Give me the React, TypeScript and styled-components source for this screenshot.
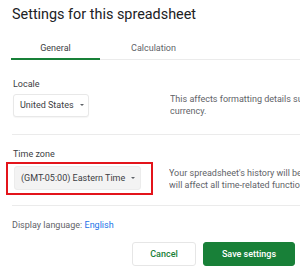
import React from "react";
import styled, { createGlobalStyle } from "styled-components";

const GlobalStyle = createGlobalStyle`
  body {
    margin: 0;
    background: #fff;
    font-family: Roboto, "Liberation Sans", sans-serif;
    overflow: hidden;
  }
`;

const Dialog = styled.div`
  width: 300px;
  height: 273px;
  padding: 3px 0 0 12px;
  box-sizing: border-box;
  overflow: hidden;
`;

const Title = styled.h2`
  margin: 0;
  font-size: 14.4px;
  line-height: 24px;
  font-weight: 400;
  color: #202124;
  white-space: nowrap;
`;

const TabBar = styled.div`
  display: flex;
  margin: 11px 0 0 -1px;
  border-bottom: 1px solid #ebebeb;
`;

const Tab = styled.div<{ $w: number; $active?: boolean }>`
  width: ${(p) => p.$w}px;
  height: 20px;
  display: flex;
  align-items: center;
  justify-content: center;
  font-size: 9px;
  color: ${(p) => (p.$active ? "#3c4043" : "#5f6368")};
  border-bottom: 2px solid ${(p) => (p.$active ? "#188038" : "transparent")};
  margin-bottom: -1px;
`;

const Section = styled.div<{ $top: number; $bottom: number }>`
  padding: ${(p) => p.$top}px 0 ${(p) => p.$bottom}px 1px;
  border-bottom: 1px solid #ebebeb;
`;

const Label = styled.div`
  font-size: 9px;
  line-height: 12px;
  color: #3c4043;
`;

const Row = styled.div<{ $top: number }>`
  display: flex;
  align-items: center;
  margin-top: ${(p) => p.$top}px;
`;

const Highlight = styled.div`
  flex: none;
  width: 147px;
  margin-left: -7px;
  padding: 2px 0 3px 6px;
  border: 2px solid #e3141b;
  box-sizing: border-box;
`;

const Select = styled.div<{ $w: number; $h: number; $filled?: boolean }>`
  flex: none;
  width: ${(p) => p.$w}px;
  height: ${(p) => p.$h}px;
  display: flex;
  align-items: center;
  padding: 0 0 0 6px;
  box-sizing: border-box;
  border: 1px solid ${(p) => (p.$filled ? "#ececec" : "#e8e8e8")};
  border-radius: 3px;
  background: ${(p) => (p.$filled ? "#f3f3f3" : "#fff")};
  box-shadow: ${(p) => (p.$filled ? "none" : "0 1px 1px rgba(0,0,0,0.04)")};
  font-size: 9px;
  color: #3c4043;
  white-space: nowrap;
`;

const Caret = styled.span`
  margin-left: 6px;
  width: 0;
  height: 0;
  border-left: 2.5px solid transparent;
  border-right: 2.5px solid transparent;
  border-top: 2.5px solid #5f6368;
`;

const Desc = styled.div<{ $gap: number }>`
  margin-left: ${(p) => p.$gap}px;
  font-size: 9px;
  line-height: 12px;
  color: #5f6368;
  white-space: nowrap;
  overflow: hidden;
`;

const Language = styled.div`
  margin-top: 13px;
  font-size: 9px;
  line-height: 12px;
  color: #5f6368;
`;

const Link = styled.span`
  color: #1a73e8;
`;

const Footer = styled.div`
  display: flex;
  justify-content: flex-end;
  gap: 7px;
  margin: 11px 5px 0 0;
`;

const Button = styled.button<{ $primary?: boolean }>`
  height: 24px;
  padding: 0;
  width: ${(p) => (p.$primary ? 92 : 64)}px;
  border-radius: 3px;
  font-family: Roboto, "Liberation Sans", sans-serif;
  font-size: 9px;
  font-weight: 500;
  border: 1px solid ${(p) => (p.$primary ? "#188038" : "#e6e6e6")};
  background: ${(p) => (p.$primary ? "#188038" : "#fff")};
  color: ${(p) => (p.$primary ? "#fff" : "#188038")};
`;

const App = () => {
  return (
    <Dialog>
      <GlobalStyle />
      <Title>Settings for this spreadsheet</Title>
      <TabBar>
        <Tab $w={89} $active>
          General
        </Tab>
        <Tab $w={107}>Calculation</Tab>
      </TabBar>
      <Section $top={18} $bottom={17}>
        <Label>Locale</Label>
        <Row $top={3}>
          <Select $w={76} $h={23}>
            United States
            <Caret />
          </Select>
          <Desc $gap={81}>
            This affects formatting details such as functions, dates, and
            <br />
            currency.
          </Desc>
        </Row>
      </Section>
      <Section $top={13} $bottom={10}>
        <Label>Time zone</Label>
        <Row $top={2}>
          <Highlight>
            <Select $w={127} $h={24} $filled>
              (GMT-05:00) Eastern Time
              <Caret />
            </Select>
          </Highlight>
          <Desc $gap={16}>
            Your spreadsheet's history will be recorded in this time zone. It
            <br />
            will affect all time-related functions.
          </Desc>
        </Row>
      </Section>
      <Language>
        Display language: <Link>English</Link>
      </Language>
      <Footer>
        <Button>Cancel</Button>
        <Button $primary>Save settings</Button>
      </Footer>
    </Dialog>
  );
};

export default App;
